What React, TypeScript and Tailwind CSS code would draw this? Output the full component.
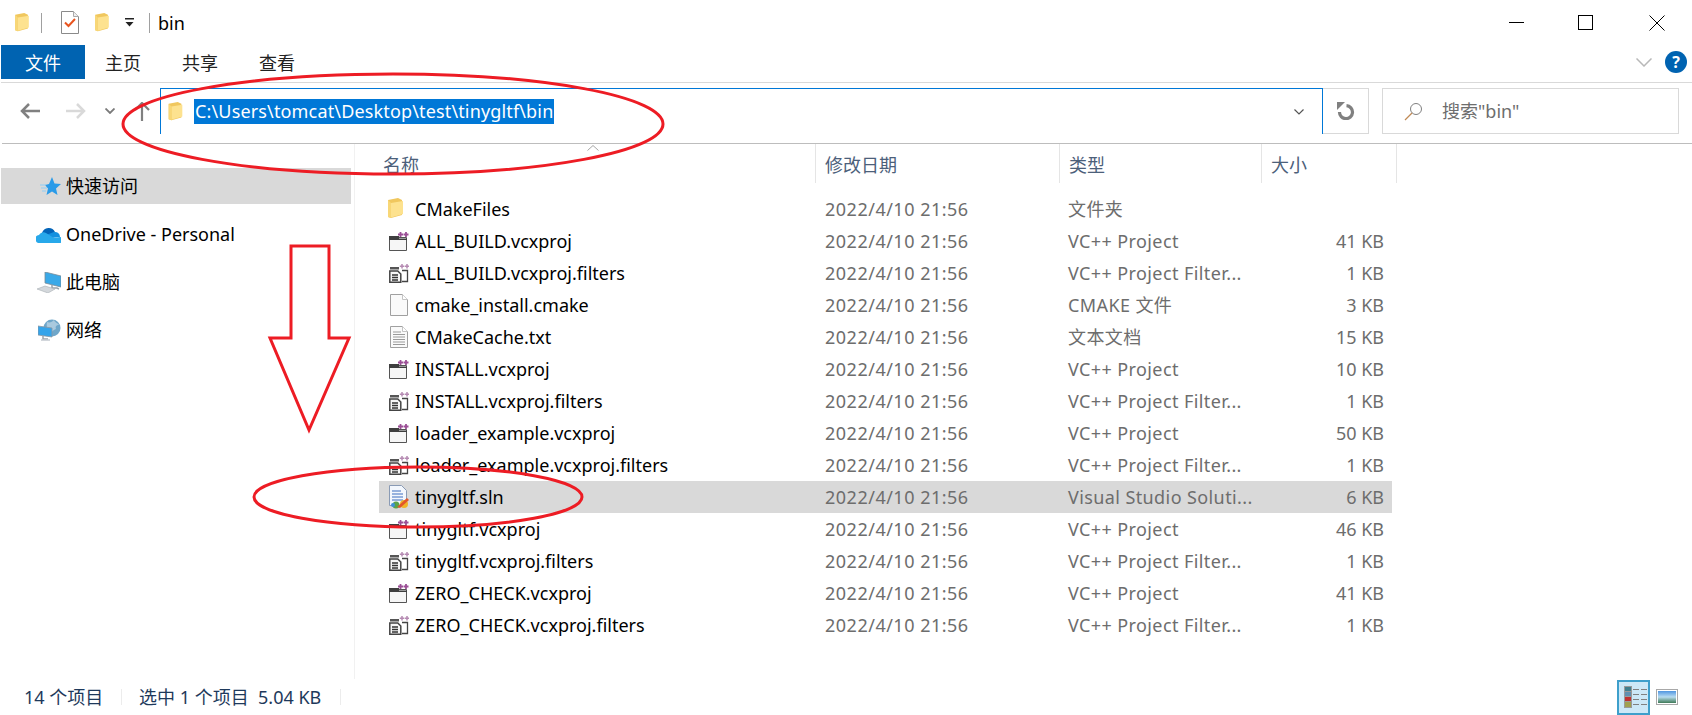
import type { ReactNode } from 'react';

interface FileRow {
  name: string;
  kind: 'folder' | 'vcx' | 'filters' | 'blank' | 'txt' | 'sln';
  type: string;
  size: string;
}

const rows: FileRow[] = [
  { name: 'CMakeFiles', kind: 'folder', type: '文件夹', size: '' },
  { name: 'ALL_BUILD.vcxproj', kind: 'vcx', type: 'VC++ Project', size: '41 KB' },
  { name: 'ALL_BUILD.vcxproj.filters', kind: 'filters', type: 'VC++ Project Filter...', size: '1 KB' },
  { name: 'cmake_install.cmake', kind: 'blank', type: 'CMAKE 文件', size: '3 KB' },
  { name: 'CMakeCache.txt', kind: 'txt', type: '文本文档', size: '15 KB' },
  { name: 'INSTALL.vcxproj', kind: 'vcx', type: 'VC++ Project', size: '10 KB' },
  { name: 'INSTALL.vcxproj.filters', kind: 'filters', type: 'VC++ Project Filter...', size: '1 KB' },
  { name: 'loader_example.vcxproj', kind: 'vcx', type: 'VC++ Project', size: '50 KB' },
  { name: 'loader_example.vcxproj.filters', kind: 'filters', type: 'VC++ Project Filter...', size: '1 KB' },
  { name: 'tinygltf.sln', kind: 'sln', type: 'Visual Studio Soluti...', size: '6 KB' },
  { name: 'tinygltf.vcxproj', kind: 'vcx', type: 'VC++ Project', size: '46 KB' },
  { name: 'tinygltf.vcxproj.filters', kind: 'filters', type: 'VC++ Project Filter...', size: '1 KB' },
  { name: 'ZERO_CHECK.vcxproj', kind: 'vcx', type: 'VC++ Project', size: '41 KB' },
  { name: 'ZERO_CHECK.vcxproj.filters', kind: 'filters', type: 'VC++ Project Filter...', size: '1 KB' },
];

// Explorer's pale yellow folder, drawn in its slight perspective
const Folder = ({ className = 'w-[15px] h-[22px]' }: { className?: string }) => (
  <svg viewBox="0 0 15 22" className={className}>
    <path d="M0 2 L10 0 L14 2 V17 L3 20 L0 19 Z" fill="#f0c75e" />
    <path d="M3 5 L15 3 V16 L3 19.5 Z" fill="#fde28f" />
    <path d="M0 2 L3 5 V20 L0 19 Z" fill="#f8d777" />
  </svg>
);

const VcxIcon = () => (
  <svg viewBox="0 0 20 19" className="w-5 h-[19px]">
    <path d="M.5 5.500h17v13H.5z" fill="#f6f6f6" stroke="#555" />
    <path d="M0 4h10v2.500h8V8H0z" fill="#3f3f3f" />
    <path d="M11.500 0v5M9 2.500h5M17 0v5M14.500 2.500h5" stroke="#9b4f96" strokeWidth="1.800" fill="none" />
  </svg>
);

const FiltersIcon = () => (
  <svg viewBox="0 0 20 19" className="w-5 h-[19px]">
    <path d="M13 6.500h5.500v11H13" fill="none" stroke="#444" strokeWidth="1.300" />
    <path d="M1 3h9v2.500H1z" fill="#555" />
    <path d="M.8 7h8l3 3v8.200H.8z" fill="#f6f6f6" stroke="#444" strokeWidth="1.500" />
    <path d="M3 11h6M3 13.500h6M3 16h6" stroke="#333" strokeWidth="1.300" />
    <path d="M13 0v4.500M10.800 2.200h4.400M18 0v4.500M15.800 2.200h4.200" stroke="#b58ab2" strokeWidth="1.500" fill="none" />
  </svg>
);

const BlankIcon = ({ lines = false }: { lines?: boolean }) => (
  <svg viewBox="0 0 18 22" className="w-[18px] h-[22px]">
    <path d="M.5.500h12l5 5v16H.500z" fill="#fafafa" stroke="#a0a0a0" />
    <path d="M12.500.500v5h5" fill="#fff" stroke="#c4c4c4" />
    {lines && (
      <path
        d="M3 6h8M3 8.500h12M3 11h12M3 13.500h12M3 16h12M3 18.500h12"
        stroke="#9a9a9a"
      />
    )}
  </svg>
);

const SlnIcon = () => (
  <svg viewBox="0 0 22 24" className="w-[22px] h-6">
    <path d="M1.500.500h12l5 5v15h-17z" fill="#f3f7fd" stroke="#8a9bb5" />
    <path d="M4 6h9M4 9h11M4 12h11M4 15h11" stroke="#3d6fc0" strokeWidth="1.200" />
    <circle cx="8" cy="20" r="3.500" fill="#5aa34a" />
    <circle cx="16" cy="19" r="4" fill="#f0b429" />
    <path d="M9 22 L19 13 L21 15 L12 23 Z" fill="#e2572b" />
    <circle cx="5" cy="20" r="2" fill="#3f8fd8" />
  </svg>
);

const fileIcons: Record<FileRow['kind'], ReactNode> = {
  folder: <div className="mr-[6px]"><Folder /></div>,
  vcx: <VcxIcon />,
  filters: <FiltersIcon />,
  blank: <BlankIcon />,
  txt: <BlankIcon lines />,
  sln: <SlnIcon />,
};

const CheckDoc = () => (
  <svg viewBox="0 0 18 23" className="w-[18px] h-[23px]">
    <path d="M.500.500h12l5 5v17H.500z" fill="#fff" stroke="#8a8a8a" />
    <path d="M12.500.500v5h5" fill="#eee" stroke="#aaa" />
    <path d="M4 11.500l3.500 3.500 6.500-7" fill="none" stroke="#e8541f" strokeWidth="2" />
  </svg>
);

const StarIcon = () => (
  <svg viewBox="0 0 21 21" className="w-[21px] h-[21px]">
    <path d="M12 1l2.500 6.500L21 8l-5 4.500L17.500 19 12 15.500 6.500 19 8 12.500 5 9l4-1z" fill="#2a9be8" />
    <path d="M0 9h6M1 12h6M2 15h4" stroke="#8fcdf5" strokeWidth="1" />
  </svg>
);

const CloudIcon = () => (
  <svg viewBox="0 0 25 17" className="w-[25px] h-[17px]">
    <path d="M6 7a7 7 0 0 1 13-1l-7 6z" fill="#0364b8" />
    <path d="M18 6a5 5 0 0 1 6 5l-8 1-6-3z" fill="#1490df" />
    <path d="M4 17a4 4 0 0 1-1-8 5 5 0 0 1 7-2l8 5 6-1a3 3 0 0 1-1 6z" fill="#28a8ea" />
  </svg>
);

const PcIcon = () => (
  <svg viewBox="0 0 24 21" className="w-6 h-[21px]">
    <path d="M8 0l16 4v11L8 11z" fill="#3aa9e8" stroke="#7a8a96" strokeWidth="0.8" />
    <path d="M15 13v3h5l2 1" fill="none" stroke="#9aa4ac" strokeWidth="1.500" />
    <path d="M0 17l8-3 10 3-7 4z" fill="#d4d8dc" stroke="#a8aeb4" strokeWidth="0.6" />
  </svg>
);

const NetworkIcon = () => (
  <svg viewBox="0 0 23 22" className="w-[23px] h-[22px]">
    <circle cx="14" cy="9" r="8.500" fill="#6fa6c9" />
    <path d="M9 3c3 1 5 0 7-2 1 3 4 3 5 5-3 0-4 2-3 4-3 1-5 4-7 4-1-3-3-5-2-11z" fill="#a9c9de" />
    <path d="M0 7l14 2v9L0 16z" fill="#35a4ea" stroke="#8c98a3" strokeWidth="0.8" />
    <path d="M5 17v3h5" fill="none" stroke="#9aa4ac" strokeWidth="1.500" />
    <path d="M3 21h9" stroke="#c4cad0" strokeWidth="1.500" />
  </svg>
);

// Red marker annotations painted over the window
const Annotations = () => (
  <svg viewBox="0 0 1692 715" className="absolute inset-0 w-[1692px] h-[715px] pointer-events-none">
    <g fill="none" stroke="#ed1c24" strokeWidth="3">
      <ellipse cx="393" cy="124" rx="270" ry="50" />
      <ellipse cx="418" cy="497" rx="164" ry="30" />
      <path d="M291 246H329V338H349L309 430L270 338H291Z" />
    </g>
  </svg>
);

const SideItem = ({ icon, label, active }: { icon: ReactNode; label: string; active?: boolean }) => (
  <div className={`h-9 mb-3 ml-px mr-[3px] flex items-center ${active ? 'bg-[#d9d9d9]' : ''}`}>
    <div className="w-[65px] pr-[5px] flex justify-end">{icon}</div>
    <span className="text-[18px] text-black">{label}</span>
  </div>
);

const HeaderCell = ({ label, className }: { label: string; className: string }) => (
  <div className={`h-full border-r border-[#e5e5e5] pl-[9px] pt-[3px] flex items-center text-[18px] text-[#4c607a] ${className}`}>
    {label}
  </div>
);

const RibbonTab = ({ label }: { label: string }) => (
  <div className="w-[77px] h-[34px] pt-[2px] flex items-center text-[18px] text-[#222]">{label}</div>
);

export default function App() {
  return (
    <div
      className="relative w-[1692px] h-[715px] overflow-hidden bg-white"
      style={{ fontFamily: '"Noto Sans", "Noto Sans CJK SC", sans-serif' }}
    >
      {/* Title bar */}
      <div className="h-[45px] flex items-center">
        <div className="ml-[15px] w-[26px]"><Folder className="w-[14px] h-[20px]" /></div>
        <div className="w-px h-5 bg-[#a0a0a0]" />
        <div className="ml-[19px]"><CheckDoc /></div>
        <div className="ml-4"><Folder className="w-[14px] h-[20px]" /></div>
        <svg viewBox="0 0 9 9" className="ml-4 w-[9px] h-[9px]">
          <path d="M0 0h9v1.500H0zM0.500 4h8L4.500 8.500z" fill="#222" />
        </svg>
        <div className="ml-[15px] w-px h-5 bg-[#a0a0a0]" />
        <span className="ml-2 text-[18px] leading-none text-black">bin</span>
        <div className="ml-auto flex items-center">
          <div className="w-[15px] h-px bg-black mr-[54px]" />
          <div className="w-[15px] h-[15px] border border-black mr-14" />
          <svg viewBox="0 0 16 16" className="w-4 h-4 mr-[27px]">
            <path d="M.500.500l15 15M15.500.500l-15 15" stroke="#000" fill="none" />
          </svg>
        </div>
      </div>

      {/* Ribbon tabs */}
      <div className="h-[38px] ml-px border-b border-[#d9d9d9] flex items-start relative">
        <div className="w-[84px] h-[34px] pt-[2px] bg-[#0063b1] text-white text-[18px] flex items-center justify-center">文件</div>
        <div className="ml-5"><RibbonTab label="主页" /></div>
        <RibbonTab label="共享" />
        <RibbonTab label="查看" />
        <div className="ml-auto flex items-center h-[34px] pr-[5px]">
          <svg viewBox="0 0 16 9" className="w-4 h-[9px] mr-[13px]">
            <path d="M.500.500L8 8 15.500.500" stroke="#b8b8b8" strokeWidth="1.500" fill="none" />
          </svg>
          <div className="w-[22px] h-[22px] rounded-full bg-[#0063b1] text-white text-[16px] font-bold flex items-center justify-center">?</div>
        </div>
      </div>

      {/* Address bar */}
      <div className="h-[61px] ml-[2px] pt-[5px] border-b border-[#bdbdbd]">
        <div className="h-[46px] flex items-stretch">
          <div className="w-[158px] flex items-center">
            <svg viewBox="0 0 20 16" className="ml-[18px] w-5 h-4">
              <path d="M9 1L2 8l7 7M2 8h18" stroke="#808080" strokeWidth="2.500" fill="none" />
            </svg>
            <svg viewBox="0 0 20 16" className="ml-[26px] w-5 h-4">
              <path d="M11 1l7 7-7 7M18 8H0" stroke="#d9d9d9" strokeWidth="2.500" fill="none" />
            </svg>
            <svg viewBox="0 0 10 6" className="ml-[19px] w-[10px] h-[6px]">
              <path d="M.500.500L5 5 9.500.500" stroke="#7a7a7a" strokeWidth="1.800" fill="none" />
            </svg>
            <svg viewBox="0 0 16 19" className="ml-[19px] w-4 h-[19px]">
              <path d="M1 8l7-7 7 7M8 1v18" stroke="#808080" strokeWidth="2.200" fill="none" />
            </svg>
          </div>
          <div className="w-[1163px] border-t border-x border-[#0078d7] flex items-center pl-[7px] pr-[18px]">
            <Folder className="w-[15px] h-[20px]" />
            <span className="ml-[11px] h-[25px] px-px bg-[#0078d7] text-white text-[18px] leading-[25px] tracking-[0.15px]">C:\Users\tomcat\Desktop\test\tinygltf\bin</span>
            <svg viewBox="0 0 10 6" className="ml-auto w-[10px] h-[6px]">
              <path d="M.500.500L5 5 9.500.500" stroke="#555" strokeWidth="1.200" fill="none" />
            </svg>
          </div>
          <div className="w-[46px] border-t border-b border-r border-[#d9d9d9] flex items-center justify-center">
            <svg viewBox="0 0 18 18" className="w-[18px] h-[18px]">
              <path d="M9.500 3.700A6.500 6.500 0 1 1 2.500 10" stroke="#808080" strokeWidth="3.200" fill="none" />
              <path d="M0 0h8L0 8z" fill="#808080" />
            </svg>
          </div>
          <div className="ml-[13px] w-[297px] border border-[#d9d9d9] flex items-center pl-[21px]">
            <svg viewBox="0 0 19 19" className="w-[19px] h-[19px]">
              <circle cx="12" cy="7" r="5.500" stroke="#808080" fill="none" />
              <path d="M8 11l-7 7" stroke="#c08a55" strokeWidth="1.300" />
            </svg>
            <span className="ml-[19px] text-[18px] text-[#6d6d6d]">搜索"bin"</span>
          </div>
        </div>
      </div>

      {/* Navigation pane and file list */}
      <div className="h-[535px] flex">
        <div className="w-[354px] pt-6">
          <SideItem icon={<StarIcon />} label="快速访问" active />
          <SideItem icon={<CloudIcon />} label="OneDrive - Personal" />
          <SideItem icon={<PcIcon />} label="此电脑" />
          <SideItem icon={<NetworkIcon />} label="网络" />
        </div>
        <div className="flex-1 border-l border-[#f1f1f1] relative">
          <svg viewBox="0 0 12 6" className="absolute left-[232px] top-[1px] w-3 h-[6px]">
            <path d="M.500 5.500L6 .500l5.500 5" stroke="#a6a6a6" fill="none" />
          </svg>
          <div className="h-[39px] flex">
            <HeaderCell label="名称" className="w-[461px] pl-[28px]" />
            <HeaderCell label="修改日期" className="w-[244px]" />
            <HeaderCell label="类型" className="w-[202px]" />
            <HeaderCell label="大小" className="w-[135px]" />
          </div>
          <div className="pt-[10px] ml-6 w-[1013px]">
            {rows.map((row) => (
              <div
                key={row.name}
                className={`h-8 flex items-center ${row.kind === 'sln' ? 'bg-[#d9d9d9]' : ''}`}
              >
                <div className="w-9 flex justify-center pl-[3px]">{fileIcons[row.kind]}</div>
                <div className="w-[410px] text-[18px] text-black whitespace-nowrap">{row.name}</div>
                <div className="w-[243px] text-[18px] tracking-[0.5px] text-[#6d6d6d]">2022/4/10 21:56</div>
                <div className="w-[203px] text-[18px] tracking-[0.4px] text-[#6d6d6d] whitespace-nowrap">{row.type}</div>
                <div className="w-[115px] pr-[2px] text-right text-[18px] text-[#6d6d6d]">{row.size}</div>
              </div>
            ))}
          </div>
        </div>
      </div>

      {/* Status bar */}
      <div className="h-9 flex items-center text-[18px] text-[#1e395b]">
        <span className="ml-6 w-[97px]">14 个项目</span>
        <div className="w-px h-4 bg-[#ececec]" />
        <span className="ml-[17px] w-[200px] whitespace-nowrap">选中 1 个项目&nbsp;&nbsp;5.04 KB</span>
        <div className="ml-px w-px h-4 bg-[#ececec]" />
        <div className="ml-auto mr-[14px] flex items-center">
          <div className="w-[33px] h-[35px] border-2 border-[#3e9fcb] bg-[#cce8f7] flex flex-col justify-center pl-[6px]">
            {['#3f7f8f', '#5f8fb0', '#c03030', '#a0a050'].map((c) => (
              <div key={c} className="flex items-center gap-[2px]">
                <div className="w-[6px] h-[5px] outline outline-[1px] -outline-offset-0 outline-[#9a9a9a]" style={{ backgroundColor: c }} />
                <div className="w-[6px] h-px bg-[#808080]" />
                <div className="w-[6px] h-px bg-[#808080]" />
              </div>
            ))}
          </div>
          <div className="ml-[6px] w-[22px] h-4 border border-[#a8a8a8] p-px bg-white">
            <div className="w-full h-full bg-gradient-to-b from-[#4f95e0] via-[#b8dcf0] to-[#3f7a58]" />
          </div>
        </div>
      </div>

      <Annotations />
    </div>
  );
}
